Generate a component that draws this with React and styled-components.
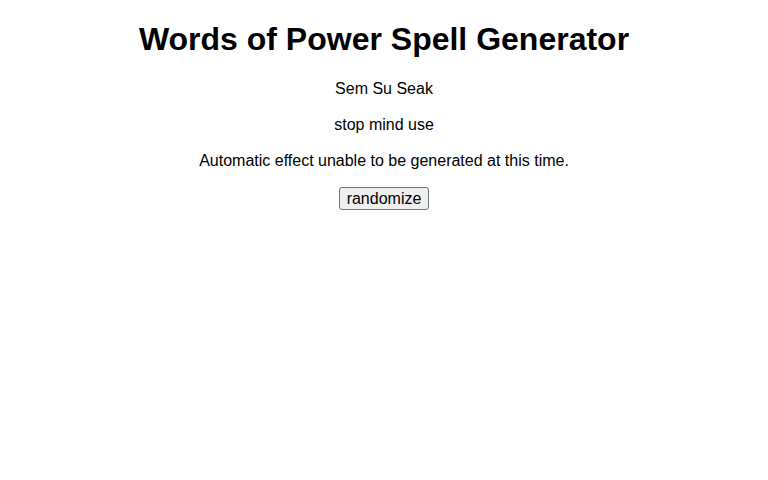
import React, { useState } from "react";
import styled, { createGlobalStyle } from "styled-components";

const Global = createGlobalStyle`
  html, body { background: #ffffff; }
  body {
    margin: 0;
    font-family: "Liberation Sans", Arial, sans-serif;
    color: #000000;
  }
`;

const Page = styled.main`
  text-align: center;
  padding: 0 8px;
  display: flow-root;
`;

const Title = styled.h1`
  font-size: 32px;
  font-weight: bold;
  line-height: normal;
  margin: 21px 0 21px;
`;

const Line = styled.p`
  font-size: 16px;
  line-height: 20px;
  margin: 16px 0;
`;

const Controls = styled.div`
  margin: 16px 0;
`;

const Button = styled.button`
  font-family: "Liberation Sans", Arial, sans-serif;
  font-size: 16px;
  color: #000000;
  background: #efefef;
  border: 1px solid #767676;
  border-radius: 3px;
  padding: 1px 7px;
  line-height: 19px;
  cursor: pointer;
`;

export default function App() {
  const [spell] = useState({
    words: "Sem Su Seak",
    meaning: "stop mind use",
    effect: "Automatic effect unable to be generated at this time.",
  });
  return (
    <>
      <Global />
      <Page>
        <Title>Words of Power Spell Generator</Title>
        <Line>{spell.words}</Line>
        <Line>{spell.meaning}</Line>
        <Line>{spell.effect}</Line>
        <Controls>
          <Button type="button">randomize</Button>
        </Controls>
      </Page>
    </>
  );
}
